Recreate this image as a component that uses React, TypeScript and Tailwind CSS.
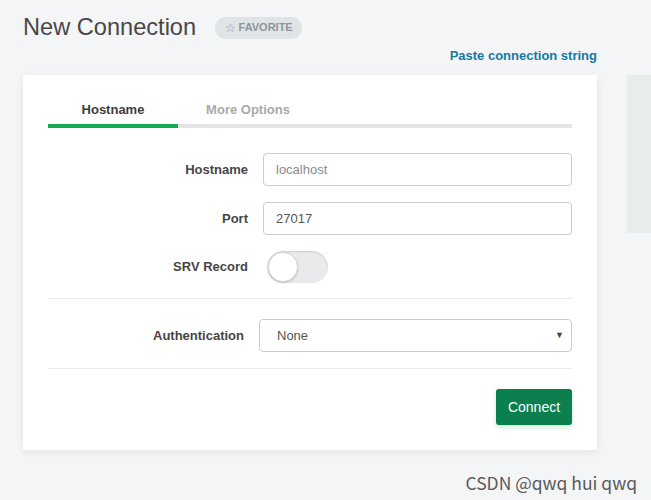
const Row = ({ label, children, labelW = 'w-[200px]', gap = 'gap-[15px]' }: { label: string; children: React.ReactNode; labelW?: string; gap?: string }) => (
  <div className={`flex items-center ${gap}`}>
    <label className={`${labelW} shrink-0 text-right text-[13px] font-bold text-[#464646]`}>{label}</label>
    {children}
  </div>
);

const App = () => (
  <div className="relative w-[651px] h-[500px] overflow-hidden bg-[#f4f5f7] font-['Liberation_Sans',Arial,sans-serif]">
    <div className="flex items-center pl-[23px] pt-[13px]">
      <h1 className="text-[23.6px] leading-[28px] font-light text-[#494747]">New Connection</h1>
      <span className="ml-[19px] mt-[1px] flex h-[22px] w-[87px] items-center justify-center gap-[3px] rounded-full bg-[#e1e4e7] text-[11px] font-bold text-[#8d9599]">
        <span className="text-[12px] font-normal">☆</span>FAVORITE
      </span>
    </div>
    <div className="w-[597px] pt-[7px] text-right text-[13px] font-bold leading-[16px] text-[#1479a5]">Paste connection string</div>

    <div className="mt-[11px] flex gap-[30px] pl-[23px]">
      <div className="h-[375px] w-[574px] shrink-0 bg-white px-[25px] pt-[20px] shadow-[0_2px_8px_rgba(0,0,0,0.08)]">
        <div className="flex h-[29px] text-[13px] font-bold">
          <div className="flex w-[130px] items-center justify-center text-[#3d3d3d]">Hostname</div>
          <div className="flex w-[140px] items-center justify-center text-[#aaaaaa]">More Options</div>
        </div>
        <div className="flex h-[4px] bg-[#e4e4e4]">
          <div className="w-[130px] bg-[#13aa52]" />
        </div>

        <div className="mt-[25px] flex flex-col gap-[16px]">
          <Row label="Hostname">
            <div className="flex h-[33px] w-[309px] items-center rounded-[4px] border border-[#cccccc] px-[12px] text-[13px] text-[#8a8a8a]">localhost</div>
          </Row>
          <Row label="Port">
            <div className="flex h-[33px] w-[309px] items-center rounded-[4px] border border-[#cccccc] px-[12px] text-[13px] text-[#555555]">27017</div>
          </Row>
          <Row label="SRV Record" gap="gap-[19px]">
            <div className="flex h-[32px] w-[61px] items-center rounded-full bg-[#e8eaec] p-[1px] shadow-[inset_0_1px_2px_rgba(0,0,0,0.12)]">
              <div className="h-[30px] w-[30px] rounded-full border border-[#d8d8d8] bg-white shadow-[0_1px_2px_rgba(0,0,0,0.2)]" />
            </div>
          </Row>
        </div>

        <div className="mt-[15px] h-px bg-[#ececec]" />

        <div className="mt-[20px]">
          <Row label="Authentication" labelW="w-[196px]">
            <div className="flex h-[33px] w-[313px] items-center justify-between rounded-[4px] border border-[#cccccc] pl-[17px] pr-[7px] text-[13px] text-[#555555]">
              <span>None</span>
              <span className="text-[9px] text-[#444444]">▼</span>
            </div>
          </Row>
        </div>

        <div className="mt-[16px] h-px bg-[#ececec]" />

        <div className="mt-[20px] flex justify-end">
          <button className="h-[36px] w-[76px] rounded-[3px] bg-[#0b7f4d] text-[14px] text-white shadow-[0_2px_4px_rgba(19,170,82,0.25)]">Connect</button>
        </div>
      </div>
      <div className="h-[158px] flex-1 bg-[#e7edea]" />
    </div>

    <div className="absolute bottom-[6px] right-[14px] text-[17.5px] leading-[22px] text-[#5a5a5a] font-['Noto_Sans_CJK_SC','DejaVu_Sans',sans-serif]">CSDN @qwq hui qwq</div>
  </div>
);

export default App;
